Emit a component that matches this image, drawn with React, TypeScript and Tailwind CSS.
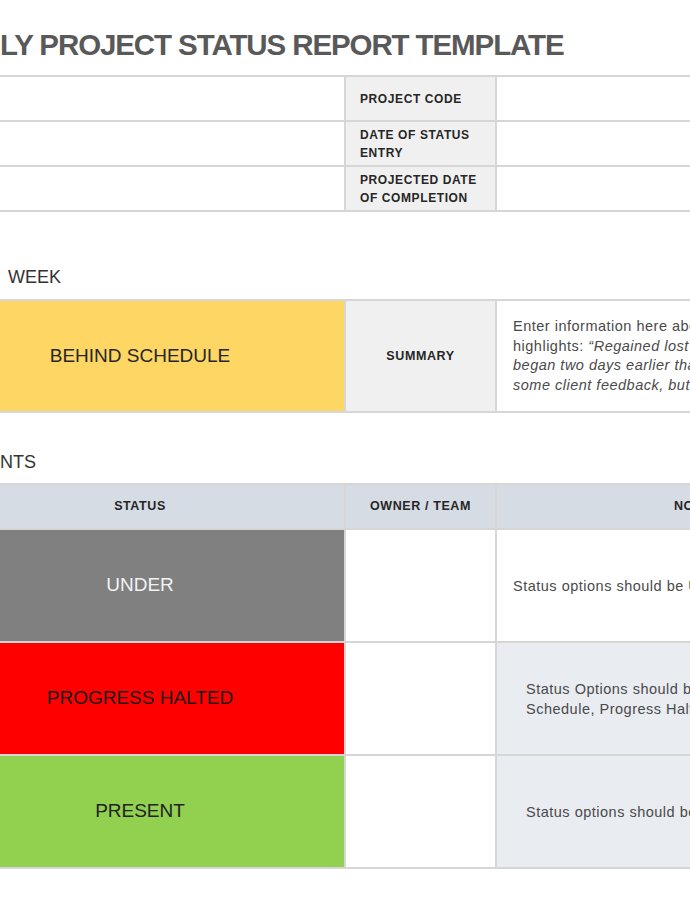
const cell = "border-[#d6d6d6]";

function InfoRow({ label }: { label: React.ReactNode }) {
  return (
    <div className={`flex h-[45px] border-b-2 ${cell}`}>
      <div className={`w-[346px] border-r-2 ${cell}`} />
      <div className={`w-[151px] border-r-2 ${cell} bg-[#f0f0f0] flex items-center pl-[14px] text-[12px] font-bold tracking-[0.6px] leading-[18px] text-[#262626]`}>
        {label}
      </div>
      <div className="flex-1" />
    </div>
  );
}

function StatusRow({
  status,
  color,
  textColor,
  notes,
  notesBg,
  notesPad,
}: {
  status: string;
  color: string;
  textColor: string;
  notes: React.ReactNode;
  notesBg: string;
  notesPad: string;
}) {
  return (
    <div className={`flex h-[113px] border-b-2 ${cell}`}>
      <div className={`w-[346px] border-r-2 ${cell} ${color} ${textColor} flex items-center justify-center pr-[64px] text-[19px]`}>
        {status}
      </div>
      <div className={`w-[151px] border-r-2 ${cell}`} />
      <div className={`w-[400px] ${notesBg} ${notesPad} flex flex-col justify-center text-[14.5px] leading-[20px] tracking-[0.5px] text-[#4a4a4a] whitespace-nowrap`}>
        {notes}
      </div>
    </div>
  );
}

export default function App() {
  return (
    <div className="w-[690px] h-[900px] overflow-hidden bg-white font-['Liberation_Sans',sans-serif]">
      <h1 className="pt-[28px] text-[29.5px] leading-[34px] font-bold tracking-[-1.1px] text-[#595959] whitespace-nowrap">
        LY PROJECT STATUS REPORT TEMPLATE
      </h1>

      <div className={`mt-[13px] w-[900px] border-t-2 ${cell}`}>
        <InfoRow label="PROJECT CODE" />
        <InfoRow label={<span>DATE OF STATUS<br />ENTRY</span>} />
        <InfoRow label={<span>PROJECTED DATE<br />OF COMPLETION</span>} />
      </div>

      <div className="mt-[56px] pl-[8px] text-[18px] leading-[18px] text-[#333]">WEEK</div>

      <div className={`mt-[13px] w-[900px] border-t-2 ${cell}`}>
        <div className={`flex h-[112px] border-b-2 ${cell}`}>
          <div className={`w-[346px] border-r-2 ${cell} bg-[#fdd663] text-[#262626] flex items-center justify-center pr-[64px] text-[19px]`}>
            BEHIND SCHEDULE
          </div>
          <div className={`w-[151px] border-r-2 ${cell} bg-[#f0f0f0] flex items-center justify-center text-[12.5px] font-bold tracking-[0.6px] text-[#262626]`}>
            SUMMARY
          </div>
          <div className="w-[400px] pl-[16px] flex flex-col justify-center text-[14.5px] leading-[19.5px] tracking-[0.5px] text-[#4a4a4a] whitespace-nowrap">
            <div>Enter information here about this week's</div>
            <div>
              highlights: <i>“Regained lost time this week,</i>
            </div>
            <div>
              <i>began two days earlier than planned,</i>
            </div>
            <div>
              <i>some client feedback, but on track.”</i>
            </div>
          </div>
        </div>
      </div>

      <div className="mt-[40px] text-[18px] leading-[18px] text-[#333]">NTS</div>

      <div className={`mt-[12px] w-[900px] border-t-2 ${cell}`}>
        <div className={`flex h-[45px] border-b-2 ${cell} bg-[#d6dce4] text-[12.5px] font-bold tracking-[0.6px] text-[#262626]`}>
          <div className={`w-[346px] border-r-2 ${cell} flex items-center justify-center pr-[64px]`}>STATUS</div>
          <div className={`w-[151px] border-r-2 ${cell} flex items-center justify-center`}>OWNER / TEAM</div>
          <div className="w-[400px] flex items-center justify-center">NOTES</div>
        </div>
        <StatusRow
          status="UNDER"
          color="bg-[#808080]"
          textColor="text-[#f2f2f2]"
          notesBg="bg-white"
          notesPad="pl-[16px]"
          notes={<div>Status options should be Under Budget,</div>}
        />
        <StatusRow
          status="PROGRESS HALTED"
          color="bg-[#ff0000]"
          textColor="text-[#1a1a1a]"
          notesBg="bg-[#e9ecf1]"
          notesPad="pl-[29px]"
          notes={
            <>
              <div>Status Options should be On Track, Behind</div>
              <div>Schedule, Progress Halted, etc.</div>
            </>
          }
        />
        <StatusRow
          status="PRESENT"
          color="bg-[#92d050]"
          textColor="text-[#222]"
          notesBg="bg-[#e9ecf1]"
          notesPad="pl-[29px]"
          notes={<div>Status options should be Present, etc.</div>}
        />
      </div>
    </div>
  );
}
